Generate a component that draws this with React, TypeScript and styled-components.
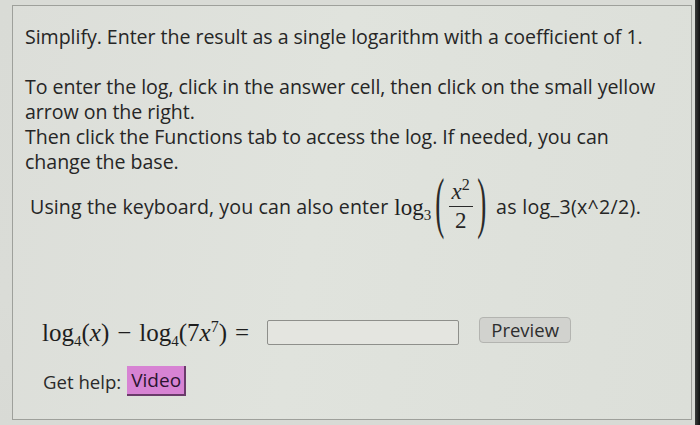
import React from "react";
import styled, { createGlobalStyle } from "styled-components";

const Global = createGlobalStyle`
  html, body { margin: 0; padding: 0; }
  body {
    width: 700px;
    height: 425px;
    overflow: hidden;
    background: #e6e8e4;
    font-family: "Open Sans", "Noto Sans", sans-serif;
  }
`;

const Screen = styled.div`
  display: grid;
  grid-template-columns: 695px 5px;
  height: 425px;
`;

const Stage = styled.div`
  padding: 5px 0 0 12px;
  background: linear-gradient(180deg, #d9dbd6 0%, #dadcd7 70%, #d8dad5 100%);
  display: flex;
  flex-direction: column;
`;

const DarkEdge = styled.div`
  background: linear-gradient(90deg, #3a3b3a, #111);
`;

const Panel = styled.div`
  width: 680px;
  height: 415px;
  box-sizing: border-box;
  border: 1px solid #9ea09b;
  background: linear-gradient(100deg, #dcded9 0%, #e0e3dd 45%, #dcdfd9 100%);
  padding: 18px 0 0 12px;
  color: #262626;
  font-size: 19.6px;
  line-height: 25px;
`;

const Para = styled.p<{ $gap?: number }>`
  margin: 0 0 ${(p) => p.$gap ?? 0}px 0;
  letter-spacing: -0.05px;
`;

const UsingLine = styled.div`
  display: flex;
  align-items: center;
  padding-left: 5px;
  margin-top: 4px;
  height: 56px;
`;

const UsingText = styled.span`
  letter-spacing: 0.1px;
`;

const Math = styled.span`
  font-family: "Liberation Serif", "DejaVu Serif", serif;
  color: #1e1e1e;
`;

const LogWord = styled(Math)`
  font-size: 23px;
  margin: 0 3px 0 6px;
  position: relative;
  top: 1px;
`;

const Sub = styled.sub`
  font-size: 15px;
  vertical-align: -5px;
  line-height: 0;
`;

const Paren = styled.span`
  font-family: "Liberation Serif", serif;
  font-size: 34px;
  display: inline-block;
  transform: translateY(-3px) scaleY(2) scaleX(0.8);
  color: #2a2a2a;
  line-height: 1;
  margin: 0;
`;

const Frac = styled.span`
  display: inline-flex;
  flex-direction: column;
  align-items: center;
  font-family: "Liberation Serif", serif;
  font-size: 23px;
  line-height: 24px;
  margin: 0 3px;
`;

const Num = styled.span`
  padding: 0 3px 2px;
  border-bottom: 1.3px solid #2a2a2a;
  font-style: italic;
`;

const Den = styled.span`
  padding-top: 2px;
`;

const Sup = styled.sup`
  font-style: normal;
  font-size: 16px;
  vertical-align: 9px;
  line-height: 0;
`;

const AsText = styled.span`
  margin-left: 9px;
  letter-spacing: 0.3px;
`;

const EqRow = styled.div`
  display: flex;
  align-items: center;
  margin-top: 83px;
  padding-left: 17px;
  height: 30px;
`;

const Expr = styled(Math)`
  font-size: 25px;
  white-space: nowrap;
`;

const Ital = styled.i`
  font-style: italic;
`;

const Op = styled.span`
  margin: 0 8px;
`;

const AnswerBox = styled.div`
  width: 190px;
  height: 23px;
  border: 1px solid #8e8f8b;
  border-radius: 2px;
  background: #e4e5e0;
  margin-left: 10px;
`;

const PreviewButton = styled.button`
  margin-left: 20px;
  margin-top: -4px;
  width: 92px;
  height: 26px;
  border: 1px solid #b3b4b0;
  border-radius: 4px;
  background: #d1d2ce;
  font-family: "Open Sans", sans-serif;
  font-size: 18.5px;
  color: #2e2e2e;
  padding: 0;
  line-height: 22px;
`;

const HelpRow = styled.div`
  display: flex;
  align-items: center;
  margin-top: 19px;
  padding-left: 18px;
  font-size: 18.6px;
  color: #2a2a2a;
`;

const VideoButton = styled.span`
  margin-left: 6px;
  background: #d783d3;
  color: #2c1530;
  border-right: 2px solid #6a3b6a;
  border-bottom: 2px solid #6a3b6a;
  padding: 1px 3px 1px 4px;
  font-size: 19px;
  line-height: 26px;
`;

export default function App() {
  return (
    <>
      <Global />
      <Screen>
        <Stage>
          <Panel>
            <Para $gap={25}>
              Simplify. Enter the result as a single logarithm with a coefficient of 1.
            </Para>
            <Para>
              To enter the log, click in the answer cell, then click on the small yellow
              <br />
              arrow on the right.
            </Para>
            <Para>
              Then click the Functions tab to access the log. If needed, you can
              <br />
              change the base.
            </Para>
            <UsingLine>
              <UsingText>Using the keyboard, you can also enter</UsingText>
              <LogWord>
                log<Sub>3</Sub>
              </LogWord>
              <Paren>(</Paren>
              <Frac>
                <Num>
                  x<Sup>2</Sup>
                </Num>
                <Den>2</Den>
              </Frac>
              <Paren>)</Paren>
              <AsText>as log_3(x^2/2).</AsText>
            </UsingLine>
            <EqRow>
              <Expr>
                log<Sub>4</Sub>(<Ital>x</Ital>)<Op>−</Op>log<Sub>4</Sub>(7<Ital>x</Ital>
                <Sup>7</Sup>)<Op>=</Op>
              </Expr>
              <AnswerBox />
              <PreviewButton>Preview</PreviewButton>
            </EqRow>
            <HelpRow>
              Get help:
              <VideoButton>Video</VideoButton>
            </HelpRow>
          </Panel>
        </Stage>
        <DarkEdge />
      </Screen>
    </>
  );
}
